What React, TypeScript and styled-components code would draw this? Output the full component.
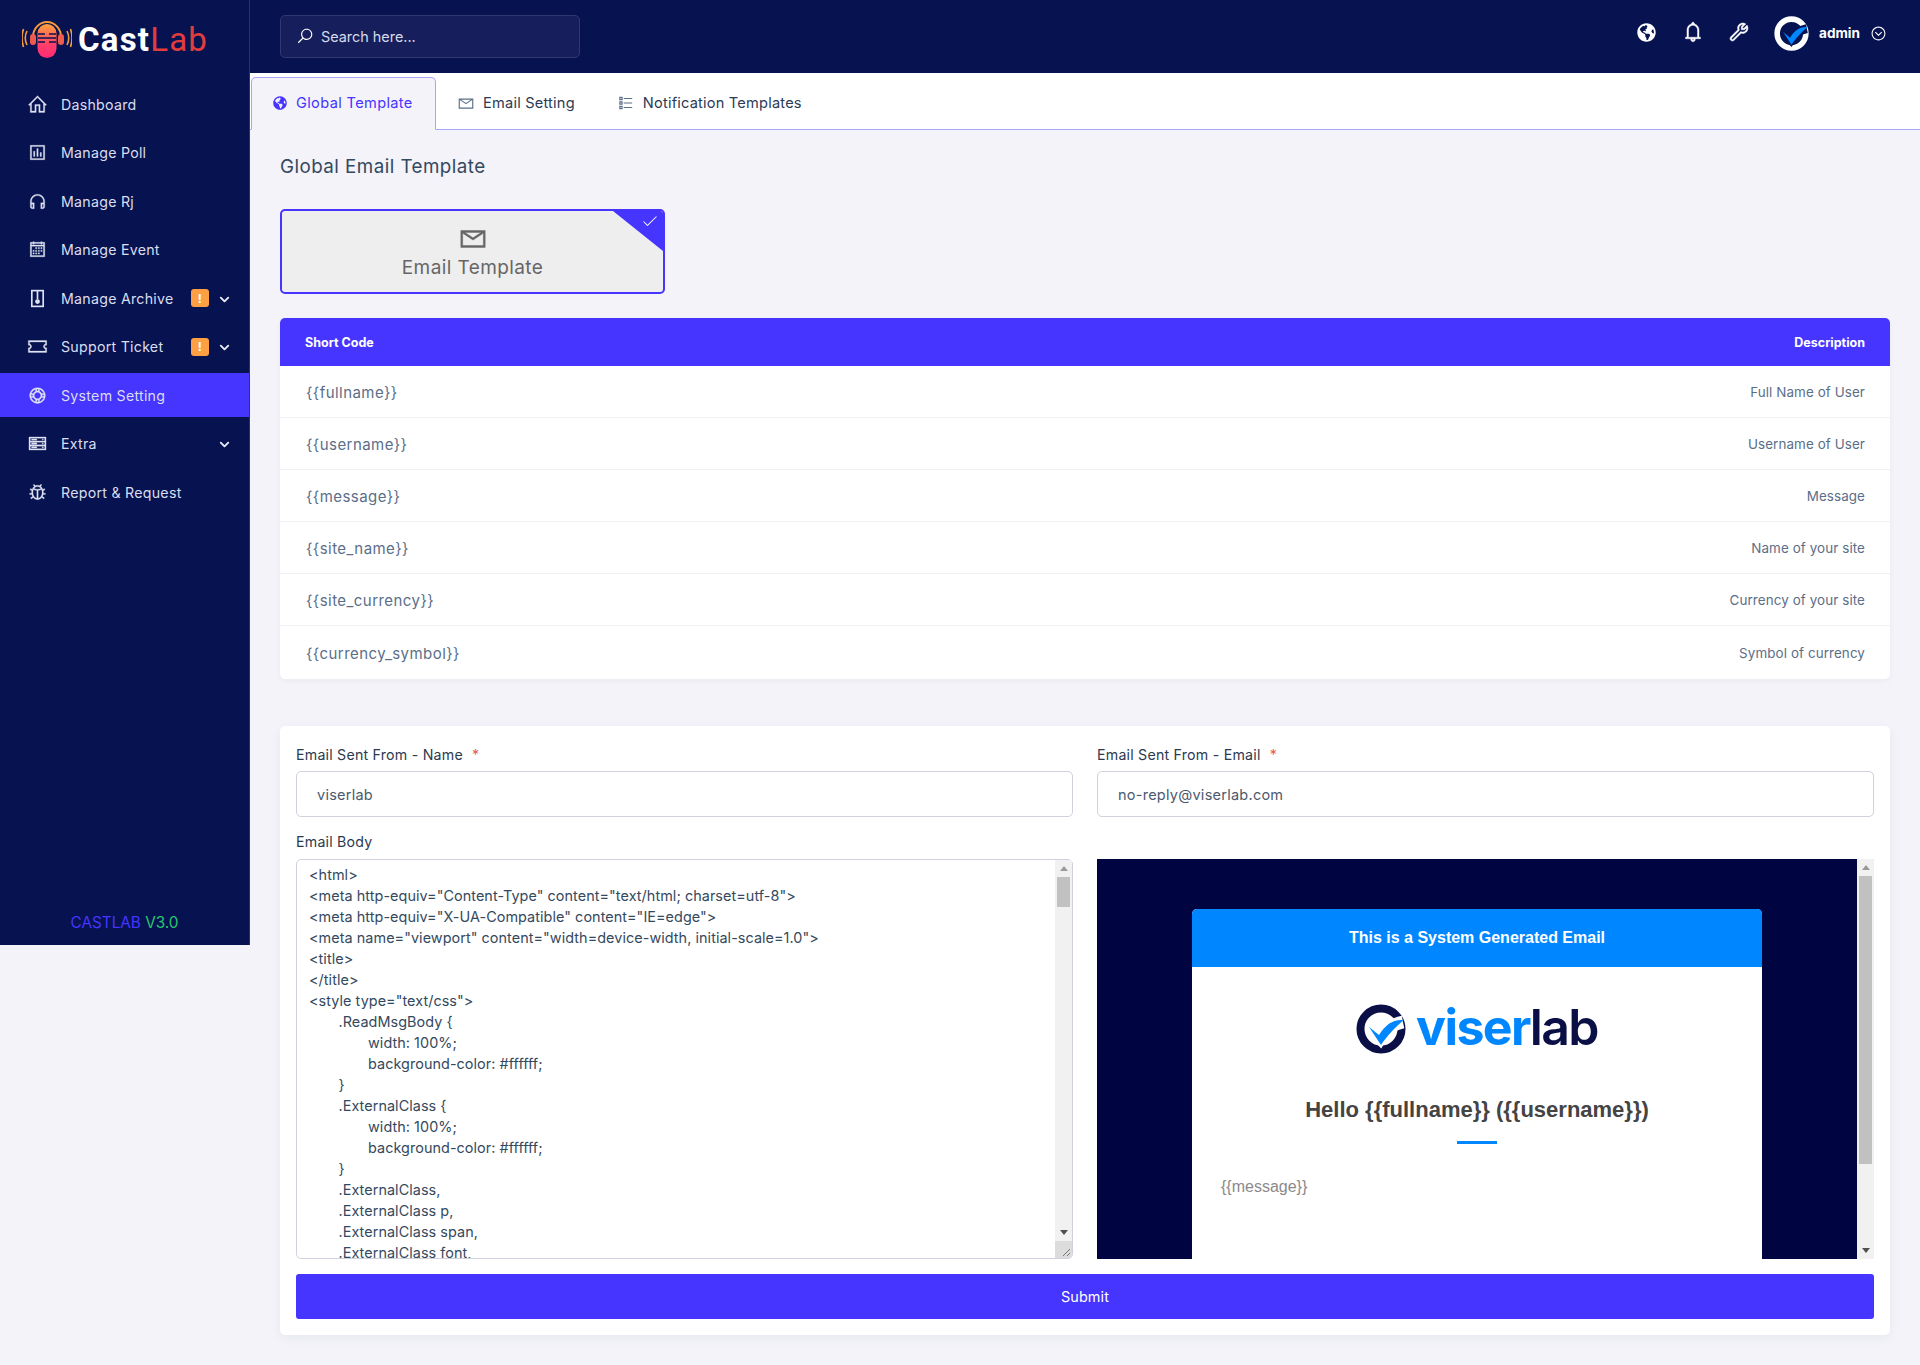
import React from "react";
import styled, { createGlobalStyle } from "styled-components";
import {
  LiaHomeSolid, LiaPollSolid, LiaHeadphonesSolid, LiaCalendarAltSolid, LiaTicketAltSolid,
  LiaLifeRing, LiaServerSolid, LiaBugSolid, LiaSearchSolid, LiaBell,
  LiaWrenchSolid, LiaChevronCircleDownSolid, LiaEnvelope, LiaListUlSolid, LiaCheckSolid,
} from "react-icons/lia";
import { FaGlobeAmericas } from "react-icons/fa";
import { ChevronDown } from "lucide-react";

const FONT = `Inter, "Liberation Sans", sans-serif`;
const PRIMARY = "#4634ff";
const NAVY = "#071251";

const Global = createGlobalStyle`
  * { box-sizing: border-box; }
  html, body { margin: 0; padding: 0; background: #f3f3f9; font-family: ${FONT}; }
`;

const Page = styled.div`display: flex; width: 100%; min-height: 1365px; align-items: flex-start;`;

const Sidebar = styled.aside`
  width: 250px; height: 945px; flex: none; background: ${NAVY};
  border-right: 1px solid #2a3367; display: flex; flex-direction: column;
`;
const Brand = styled.div`height: 82px; display: flex; align-items: flex-start; gap: 6px; padding: 20px 0 0 22px;`;
const BrandText = styled.div`
  font-family: "Roboto", sans-serif; font-weight: 700; font-size: 33px; line-height: 40px;
  letter-spacing: 1.2px; color: #fff; span { color: #e23d3d; font-weight: 400; }
`;
const Nav = styled.nav`display: flex; flex-direction: column; gap: 4.5px;`;
const NavItem = styled.a<{ $active?: boolean }>`
  height: 44px; display: flex; align-items: center; padding: 0 17px 0 26px;
  background: ${(p) => (p.$active ? PRIMARY : "transparent")};
  color: #d9deef; font-size: 14.2px; letter-spacing: 0.26px; font-weight: 400;
  svg { flex: none; }
`;
const NavIcon = styled.span`
  width: 22px; margin-right: 13px; display: flex; justify-content: center; font-size: 21px; color: #dfe3f2;
  svg { stroke: currentColor; stroke-width: 0.45; }
`;
const ArchiveSvg = styled.svg`
  && { fill: none; stroke: currentColor; stroke-width: 1.9; }
  circle { fill: currentColor; }
`;
const NavLabel = styled.span`flex: 1;`;
const WarnBadge = styled.span`
  width: 18px; height: 18px; border-radius: 3px; background: #ff9f43; color: #fff; font-weight: 700;
  font-size: 12px; display: flex; align-items: center; justify-content: center; margin-right: 7px;
`;
const Chevron = styled.span`width: 16px; display: flex; justify-content: center; color: #e8ebf6; margin-top: 2px;`;
const Version = styled.div`margin-top: auto; padding-bottom: 12px; text-align: center; font-size: 15.3px; line-height: 20px; color: ${PRIMARY}; span { color: #28c76f; }`;

const Main = styled.main`flex: 1; min-width: 0;`;
const Topbar = styled.header`height: 73px; background: ${NAVY}; display: flex; align-items: center; padding: 0 34px 0 30px;`;
const SearchBox = styled.div`
  width: 300px; height: 43px; border-radius: 5px; background: #161f5c; border: 1px solid #2f3870;
  display: flex; align-items: center; padding: 0 15px; gap: 7px; color: #d5d9ea; font-size: 14.4px;
  margin-top: -1px;
  svg { font-size: 18px; color: #fff; }
`;
const TopRight = styled.div`margin-left: auto; display: flex; align-items: center; color: #fff; padding-bottom: 7px;`;
const TopIcon = styled.span`
  width: 24px; display: flex; justify-content: center; font-size: 24px; margin-right: 22px; margin-top: -2px;
  svg { stroke: currentColor; stroke-width: 0.6; }
`;
const GlobeTop = styled(TopIcon)`font-size: 19px; svg { stroke-width: 0; }`;
const AdminName = styled.span`font-size: 13.6px; font-weight: 700; margin-left: 10px; margin-right: 10px;`;
const Avatar = styled.span`width: 35px; height: 35px; display: flex; margin-left: 1px;`;
const CircleIcon = styled.span`display: flex; font-size: 17px; margin-right: -1px;`;

const TabBar = styled.div`height: 57px; background: #fff; border-bottom: 1px solid #a9a5f5; display: flex; align-items: stretch;`;
const Tab = styled.a<{ $active?: boolean }>`
  display: flex; align-items: center; gap: 8px; padding: 0 ${(p) => (p.$active ? "22.4px" : "20px")} 2px 20px; font-size: 14.6px;
  letter-spacing: ${(p) => (p.$active ? "0.35px" : "0.2px")};
  margin-top: 4px; margin-bottom: -1px; margin-left: ${(p) => (p.$active ? "1px" : "0")};
  color: ${(p) => (p.$active ? PRIMARY : "#2c3a55")};
  background: ${(p) => (p.$active ? "#f3f3f9" : "transparent")};
  border: 1px solid ${(p) => (p.$active ? "#a9a5f5" : "transparent")};
  border-bottom: 1px solid ${(p) => (p.$active ? "#f3f3f9" : "transparent")};
  border-radius: 5px 5px 0 0;
  svg { font-size: 18px; color: ${(p) => (p.$active ? PRIMARY : "#5b6e88")}; }
  svg.globe { font-size: 14px; margin: 0 1px; }
`;

const Content = styled.div`padding: 0 30px 30px; `;
const PageTitle = styled.h2`margin: 0; padding-top: 25px; font-size: 18.8px; line-height: 24px; font-weight: 400; color: #34495e; letter-spacing: 0.45px;`;

const TemplateCard = styled.div`
  position: relative; overflow: hidden; width: 385px; height: 85px; margin-top: 30px;
  border: 2px solid ${PRIMARY}; border-radius: 5px; background: #eeeeee; color: #666;
  display: flex; flex-direction: column; align-items: center; justify-content: flex-start; padding-top: 12px;
`;
const TemplateIcon = styled.span`display: flex; font-size: 30px; height: 30px; color: #666; svg { stroke: currentColor; stroke-width: 0.5; }`;
const TemplateLabel = styled.span`font-size: 19px; line-height: 26px; letter-spacing: 0.4px; margin-top: 2px;`;
const Corner = styled.span`
  position: absolute; top: 0; right: 0; width: 50px; height: 40px; background: ${PRIMARY};
  clip-path: polygon(0 0, 100% 0, 100% 100%);
`;
const CornerCheck = styled.span`position: absolute; top: 2px; right: 5px; display: flex; font-size: 16px; color: #fff;`;

const CodeTable = styled.div`margin-top: 24px; border-radius: 5px; overflow: hidden; background: #fff; box-shadow: 0 2px 6px rgba(20,20,60,.04);`;
const HeaderRow = styled.div`
  height: 48px; background: ${PRIMARY}; color: #fff; font-size: 12.5px; font-weight: 700;
  display: flex; justify-content: space-between; align-items: center; padding: 0 25px;
`;
const CodeRow = styled.div`
  height: 52.1px; display: flex; justify-content: space-between; align-items: center; padding: 1px 25px 0 26px;
  border-bottom: 1px solid #f1f1f4; &:last-child { border-bottom: 0; }
`;
const CodeName = styled.span`font-size: 15px; color: #5b6e88; letter-spacing: 0.45px;`;
const CodeDesc = styled.span`font-size: 13.4px; color: #5b6e88; letter-spacing: 0.1px;`;

const FormCard = styled.form`
  margin-top: 47px; background: #fff; border-radius: 5px; padding: 16px;
  box-shadow: 0 3px 12px rgba(20,20,60,.05);
`;
const Row = styled.div`display: grid; grid-template-columns: 1fr 1fr; column-gap: 24px;`;
const Field = styled.div`display: flex; flex-direction: column; min-width: 0;`;
const Label = styled.label`
  font-size: 14.2px; line-height: 20px; color: #2c3a50; letter-spacing: 0.22px; margin-bottom: 6.5px; font-weight: 400;
  margin-top: 3px;
  i { color: #ea5455; font-style: normal; margin-left: 5px; }
`;
const TextInput = styled.input`
  height: 46px; border: 1px solid #cfd2de; border-radius: 5px; padding: 0 20px; font: 14.5px ${FONT};
  letter-spacing: 0.25px; color: #4b5a6e; outline: none; background: #fff; width: 100%;
`;
const BodyRow = styled(Row)`margin-top: 12px;`;
const TextareaWrap = styled.div`position: relative; height: 400px;`;
const Textarea = styled.textarea`
  display: block; width: 100%; height: 400px; border: 1px solid #cfd2de; border-radius: 5px; padding: 4px 30px 4px 12px;
  font: 14.4px/21px ${FONT}; letter-spacing: 0.06px; color: #34495e; tab-size: 29.5px; outline: none;
  overflow: hidden; resize: none; white-space: pre-wrap; background: #fff;
`;
const Rail = styled.div`
  width: 17px; background: #f1f1f1; display: flex; flex-direction: column; align-items: center; flex: none;
`;
const TextareaRail = styled(Rail)`position: absolute; top: 1px; right: 1px; height: 381px;`;
const RailButton = styled.span`height: 17px; flex: none; display: flex; align-items: center; justify-content: center;`;
const ArrowUp = styled.i`width: 0; height: 0; border: 4px solid transparent; border-top: 0; border-bottom: 5px solid #9a9a9a;`;
const ArrowDown = styled.i`width: 0; height: 0; border: 4px solid transparent; border-bottom: 0; border-top: 5px solid #505050;`;
const RailTrack = styled.div`flex: 1; width: 100%; padding: 0 2px;`;
const RailThumb = styled.div<{ $size: number; $offset: number }>`
  background: #c1c1c1; height: ${(p) => p.$size}px; margin-top: ${(p) => p.$offset}px;
`;
const Grip = styled.span`
  position: absolute; right: 1px; bottom: 1px; width: 17px; height: 17px; border-bottom-right-radius: 4px; background: #dcdcdc; color: #777;
  display: flex;
`;
const PreviewSpacer = styled.div`height: 29.5px;`;
const PreviewFrame = styled.div`display: flex; height: 400px;`;
const Preview = styled.div`flex: 1; min-width: 0; overflow: hidden; background: #000440;`;
const Letter = styled.div`
  width: 570px; margin: 50px auto 0; height: 458px; background: #fff; border-radius: 5px 5px 0 0;
  font-family: "Liberation Sans", Arial, sans-serif; overflow: hidden;
`;
const LetterHead = styled.div`height: 58px; background: #0087ff; color: #fff; font-weight: 700; font-size: 16px; display: flex; align-items: center; justify-content: center;`;
const LetterLogo = styled.div`margin-top: 37px; display: flex; justify-content: center; align-items: center; gap: 10px; height: 50px;`;
const LogoMark = styled.span`display: flex; width: 50px; height: 50px;`;
const LogoWord = styled.span`
  font-family: ${FONT}; font-weight: 700; font-size: 50px; line-height: 50px; letter-spacing: -1.6px; color: #0087ff; margin-top: -4px;
  b { color: #0a0f45; font-weight: 600; }
`;
const Hello = styled.div`margin-top: 42px; text-align: center; font-size: 22px; line-height: 28px; font-weight: 700; color: #444;`;
const Rule = styled.div`width: 40px; height: 3px; background: #0087ff; margin: 17px auto 0;`;
const Message = styled.div`margin: 33px 0 0 29px; font-size: 16px; line-height: 20px; color: #8a8a8a;`;
const Submit = styled.button`
  display: block; width: 100%; height: 45px; margin-top: 15px; border: 0; border-radius: 3px; background: ${PRIMARY};
  color: #fff; font: 14.4px ${FONT}; letter-spacing: 0.1px;
`;

const ViserMark = ({ ring, bg }: { ring: string; bg: string }) => (
  <svg viewBox="0 0 50 50" width="100%" height="100%">
    <circle cx="25" cy="25" r="20.5" fill="none" stroke={ring} strokeWidth="8" />
    <path d="M16 26 L24 34 Q32 21 47 18" fill="none" stroke={bg} strokeWidth="13" />
    <path d="M13 23 L23 31 C30 20 37 15 48 16 C40 22 31 32 25 41 Z" fill="#0087ff" />
  </svg>
);

const CastLogo = () => (
  <svg width="50" height="38" viewBox="0 0 50 38">
    <defs>
      <linearGradient id="mic" x1="0" y1="0" x2="0" y2="1">
        <stop offset="0" stopColor="#ffa23c" />
        <stop offset="0.6" stopColor="#ff3f6a" />
        <stop offset="1" stopColor="#ff2a74" />
      </linearGradient>
    </defs>
    <path d="M11 17 A14 15 0 0 1 39 17" fill="none" stroke="#f79a3a" strokeWidth="2" />
    <path d="M5 11 Q1.5 18 5 25 M1.5 9 Q-1.5 18 1.5 27 M45 11 Q48.5 18 45 25 M48.5 9 Q51.5 18 48.5 27" fill="none" stroke="#f79a3a" strokeWidth="1.6" />
    <rect x="8" y="14" width="6" height="11" rx="3" fill="#ef5a4e" />
    <rect x="36" y="14" width="6" height="11" rx="3" fill="#ef5a4e" />
    <rect x="15.5" y="4" width="19" height="34" rx="9.5" fill="url(#mic)" />
    <path d="M16 14 H23 M27 14 H34 M16 18 H34 M16 22 H23 M27 22 H34" stroke="#071251" strokeWidth="1.7" />
  </svg>
);

const ArchiveIcon = () => (
  <ArchiveSvg width="1em" height="1em" viewBox="0 0 24 24">
    <rect x="5.5" y="3" width="13" height="18" />
    <path d="M12 3 V13" />
    <circle cx="12" cy="15.5" r="1.8" />
  </ArchiveSvg>
);

const ResizeGrip = () => (
  <svg width="17" height="17" viewBox="0 0 17 17" stroke="currentColor" strokeWidth="1">
    <path d="M15 8 L8 15 M15 12 L12 15" />
  </svg>
);

const FakeScrollbar = ({ size, offset }: { size: number; offset: number }) => (
  <>
    <RailButton><ArrowUp /></RailButton>
    <RailTrack><RailThumb $size={size} $offset={offset} /></RailTrack>
    <RailButton><ArrowDown /></RailButton>
  </>
);

const navItems = [
  { label: "Dashboard", icon: <LiaHomeSolid /> },
  { label: "Manage Poll", icon: <LiaPollSolid /> },
  { label: "Manage Rj", icon: <LiaHeadphonesSolid /> },
  { label: "Manage Event", icon: <LiaCalendarAltSolid /> },
  { label: "Manage Archive", icon: <ArchiveIcon />, warn: true, more: true },
  { label: "Support Ticket", icon: <LiaTicketAltSolid />, warn: true, more: true },
  { label: "System Setting", icon: <LiaLifeRing />, active: true },
  { label: "Extra", icon: <LiaServerSolid />, more: true },
  { label: "Report & Request", icon: <LiaBugSolid /> },
];

const codes = [
  ["{{fullname}}", "Full Name of User"],
  ["{{username}}", "Username of User"],
  ["{{message}}", "Message"],
  ["{{site_name}}", "Name of your site"],
  ["{{site_currency}}", "Currency of your site"],
  ["{{currency_symbol}}", "Symbol of currency"],
];

const templateBody = `<html>
<meta http-equiv="Content-Type" content="text/html; charset=utf-8">
<meta http-equiv="X-UA-Compatible" content="IE=edge">
<meta name="viewport" content="width=device-width, initial-scale=1.0">
<title>
</title>
<style type="text/css">
\t.ReadMsgBody {
\t\twidth: 100%;
\t\tbackground-color: #ffffff;
\t}
\t.ExternalClass {
\t\twidth: 100%;
\t\tbackground-color: #ffffff;
\t}
\t.ExternalClass,
\t.ExternalClass p,
\t.ExternalClass span,
\t.ExternalClass font,
\t.ExternalClass td,
\t.ExternalClass div {
\t\tline-height: 100%;
\t}
</style>
</html>`;

export default function App() {
  return (
    <>
      <Global />
      <Page>
        <Sidebar>
          <Brand>
            <CastLogo />
            <BrandText>Cast<span>Lab</span></BrandText>
          </Brand>
          <Nav>
            {navItems.map((n) => (
              <NavItem key={n.label} $active={n.active}>
                <NavIcon>{n.icon}</NavIcon>
                <NavLabel>{n.label}</NavLabel>
                {n.warn && <WarnBadge>!</WarnBadge>}
                {n.more && <Chevron><ChevronDown size={15} strokeWidth={3} /></Chevron>}
              </NavItem>
            ))}
          </Nav>
          <Version>CASTLAB <span>V3.0</span></Version>
        </Sidebar>
        <Main>
          <Topbar>
            <SearchBox><LiaSearchSolid />Search here...</SearchBox>
            <TopRight>
              <GlobeTop><FaGlobeAmericas /></GlobeTop>
              <TopIcon><LiaBell /></TopIcon>
              <TopIcon><LiaWrenchSolid /></TopIcon>
              <Avatar><ViserMark ring="#fff" bg={NAVY} /></Avatar>
              <AdminName>admin</AdminName>
              <CircleIcon><LiaChevronCircleDownSolid /></CircleIcon>
            </TopRight>
          </Topbar>
          <TabBar>
            <Tab $active><FaGlobeAmericas className="globe" />Global Template</Tab>
            <Tab><LiaEnvelope />Email Setting</Tab>
            <Tab><LiaListUlSolid />Notification Templates</Tab>
          </TabBar>
          <Content>
            <PageTitle>Global Email Template</PageTitle>
            <TemplateCard>
              <Corner />
              <CornerCheck><LiaCheckSolid /></CornerCheck>
              <TemplateIcon><LiaEnvelope /></TemplateIcon>
              <TemplateLabel>Email Template</TemplateLabel>
            </TemplateCard>
            <CodeTable>
              <HeaderRow><span>Short Code</span><span>Description</span></HeaderRow>
              {codes.map(([c, d]) => (
                <CodeRow key={c}><CodeName>{c}</CodeName><CodeDesc>{d}</CodeDesc></CodeRow>
              ))}
            </CodeTable>
            <FormCard>
              <Row>
                <Field>
                  <Label>Email Sent From - Name <i>*</i></Label>
                  <TextInput defaultValue="viserlab" />
                </Field>
                <Field>
                  <Label>Email Sent From - Email <i>*</i></Label>
                  <TextInput defaultValue="no-reply@viserlab.com" />
                </Field>
              </Row>
              <BodyRow>
                <Field>
                  <Label>Email Body</Label>
                  <TextareaWrap>
                    <Textarea readOnly value={templateBody} />
                    <TextareaRail><FakeScrollbar size={30} offset={0} /></TextareaRail>
                    <Grip><ResizeGrip /></Grip>
                  </TextareaWrap>
                </Field>
                <Field>
                  <PreviewSpacer />
                  <PreviewFrame>
                    <Preview>
                      <Letter>
                        <LetterHead>This is a System Generated Email</LetterHead>
                        <LetterLogo>
                          <LogoMark><ViserMark ring="#0a0f45" bg="#fff" /></LogoMark>
                          <LogoWord>viser<b>lab</b></LogoWord>
                        </LetterLogo>
                        <Hello>Hello {"{{fullname}}"} ({"{{username}}"})</Hello>
                        <Rule />
                        <Message>{"{{message}}"}</Message>
                      </Letter>
                    </Preview>
                    <Rail><FakeScrollbar size={288} offset={0} /></Rail>
                  </PreviewFrame>
                </Field>
              </BodyRow>
              <Submit type="button">Submit</Submit>
            </FormCard>
          </Content>
        </Main>
      </Page>
    </>
  );
}
